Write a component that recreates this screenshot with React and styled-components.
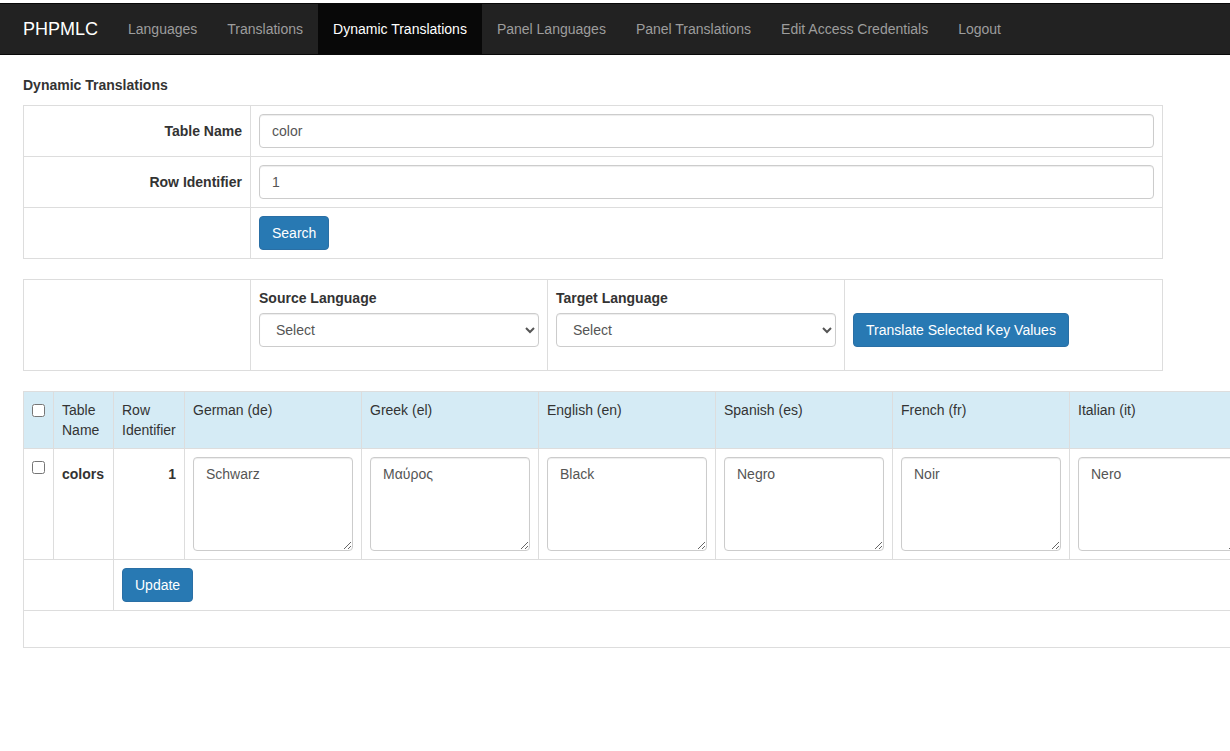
import React from "react";
import styled, { createGlobalStyle } from "styled-components";

const GlobalStyle = createGlobalStyle`
  * {
    box-sizing: border-box;
  }
  html, body {
    margin: 0;
    background: #fff;
    overflow: hidden;
  }
  body {
    font-family: "Liberation Sans", Arial, sans-serif;
    font-size: 14px;
    line-height: 20px;
    color: #333;
  }
`;

const Page = styled.div`
  width: 1230px;
  height: 751px;
  padding-top: 3px;
  overflow: hidden;
`;

const Navbar = styled.nav`
  display: flex;
  height: 52px;
  padding-left: 8px;
  background-color: #222;
  border-top: 1px solid #080808;
  border-bottom: 1px solid #080808;
`;

const Brand = styled.a`
  padding: 15px;
  font-size: 18px;
  line-height: 20px;
  color: #fff;
`;

const NavLink = styled.a`
  padding: 15px;
  line-height: 20px;
  color: ${(p) => (p.$active ? "#fff" : "#9d9d9d")};
  background-color: ${(p) => (p.$active ? "#080808" : "transparent")};
`;

const Content = styled.main`
  padding: 20px 0 0 23px;
`;

const Heading = styled.div`
  font-weight: 700;
  height: 20px;
  margin-bottom: 10px;
`;

const Table = styled.table`
  table-layout: fixed;
  border-collapse: collapse;
  border-spacing: 0;
  width: ${(p) => p.$width}px;
  margin-bottom: 20px;
`;

const Cell = styled.td`
  padding: 8px;
  border: 1px solid #ddd;
  vertical-align: top;
  text-align: ${(p) => p.$align || "left"};
`;

const LabelCell = styled(Cell)`
  padding-top: 15px;
  font-weight: 700;
  text-align: right;
`;

const ValueCell = styled(Cell)`
  padding-top: 15px;
  font-weight: 700;
`;

const ActionCell = styled(Cell)`
  padding-top: 33px;
`;

const HeadCell = styled.th`
  padding: 8px;
  border: 1px solid #ddd;
  background-color: #d5ebf5;
  font-weight: 400;
  text-align: left;
  vertical-align: top;
`;

const EmptyCell = styled(Cell)`
  height: 37px;
`;

const FieldGroup = styled.div`
  margin-bottom: 15px;
`;

const FieldLabel = styled.label`
  display: block;
  margin-bottom: 5px;
  font-weight: 700;
`;

const control = `
  display: block;
  width: 100%;
  padding: 6px 12px;
  font-family: "Liberation Sans", Arial, sans-serif;
  font-size: 14px;
  line-height: 20px;
  color: #555;
  background-color: #fff;
  border: 1px solid #ccc;
  border-radius: 4px;
  box-shadow: inset 0 1px 1px rgba(0, 0, 0, 0.075);
`;

const Input = styled.input`
  ${control};
  height: 34px;
`;

const Select = styled.select`
  ${control};
  height: 34px;
`;

const TextArea = styled.textarea`
  ${control};
  height: 94px;
  resize: both;
`;

const Button = styled.button`
  display: inline-block;
  height: 34px;
  padding: 6px 12px;
  font-family: "Liberation Sans", Arial, sans-serif;
  font-size: 14px;
  line-height: 20px;
  color: #fff;
  background-color: #2879b3;
  border: 1px solid #2a6fa5;
  border-radius: 4px;
`;

const Checkbox = styled.input.attrs({ type: "checkbox" })`
  display: block;
  width: 13px;
  height: 13px;
  margin: 4px 0 0;
`;

const navItems = [
  "Languages",
  "Translations",
  "Dynamic Translations",
  "Panel Languages",
  "Panel Translations",
  "Edit Access Credentials",
  "Logout",
];

const languages = [
  { name: "German (de)", value: "Schwarz" },
  { name: "Greek (el)", value: "Μαύρος" },
  { name: "English (en)", value: "Black" },
  { name: "Spanish (es)", value: "Negro" },
  { name: "French (fr)", value: "Noir" },
  { name: "Italian (it)", value: "Nero" },
];

function SearchTable() {
  return (
    <Table $width={1139}>
      <colgroup>
        <col width="227" />
        <col width="912" />
      </colgroup>
      <tbody>
        <tr>
          <LabelCell>Table Name</LabelCell>
          <Cell>
            <Input defaultValue="color" />
          </Cell>
        </tr>
        <tr>
          <LabelCell>Row Identifier</LabelCell>
          <Cell>
            <Input defaultValue="1" />
          </Cell>
        </tr>
        <tr>
          <Cell />
          <Cell>
            <Button>Search</Button>
          </Cell>
        </tr>
      </tbody>
    </Table>
  );
}

function LanguageTable() {
  return (
    <Table $width={1139}>
      <colgroup>
        <col width="227" />
        <col width="297" />
        <col width="297" />
        <col width="318" />
      </colgroup>
      <tbody>
        <tr>
          <Cell />
          <Cell>
            <FieldGroup>
              <FieldLabel>Source Language</FieldLabel>
              <Select>
                <option>Select</option>
              </Select>
            </FieldGroup>
          </Cell>
          <Cell>
            <FieldGroup>
              <FieldLabel>Target Language</FieldLabel>
              <Select>
                <option>Select</option>
              </Select>
            </FieldGroup>
          </Cell>
          <ActionCell>
            <Button>Translate Selected Key Values</Button>
          </ActionCell>
        </tr>
      </tbody>
    </Table>
  );
}

function ValuesTable() {
  return (
    <Table $width={1223}>
      <colgroup>
        <col width="30" />
        <col width="60" />
        <col width="71" />
        {languages.map((l) => (
          <col key={l.name} width="177" />
        ))}
      </colgroup>
      <thead>
        <tr>
          <HeadCell>
            <Checkbox />
          </HeadCell>
          <HeadCell>Table Name</HeadCell>
          <HeadCell>Row Identifier</HeadCell>
          {languages.map((l) => (
            <HeadCell key={l.name}>{l.name}</HeadCell>
          ))}
        </tr>
      </thead>
      <tbody>
        <tr>
          <Cell>
            <Checkbox />
          </Cell>
          <ValueCell>colors</ValueCell>
          <ValueCell $align="right">1</ValueCell>
          {languages.map((l) => (
            <Cell key={l.name}>
              <TextArea defaultValue={l.value} />
            </Cell>
          ))}
        </tr>
        <tr>
          <Cell colSpan={2} />
          <Cell colSpan={7}>
            <Button>Update</Button>
          </Cell>
        </tr>
        <tr>
          <EmptyCell colSpan={9} />
        </tr>
      </tbody>
    </Table>
  );
}

export default function App() {
  return (
    <Page>
      <GlobalStyle />
      <Navbar>
        <Brand>PHPMLC</Brand>
        {navItems.map((item) => (
          <NavLink key={item} $active={item === "Dynamic Translations"}>
            {item}
          </NavLink>
        ))}
      </Navbar>
      <Content>
        <Heading>Dynamic Translations</Heading>
        <SearchTable />
        <LanguageTable />
        <ValuesTable />
      </Content>
    </Page>
  );
}
